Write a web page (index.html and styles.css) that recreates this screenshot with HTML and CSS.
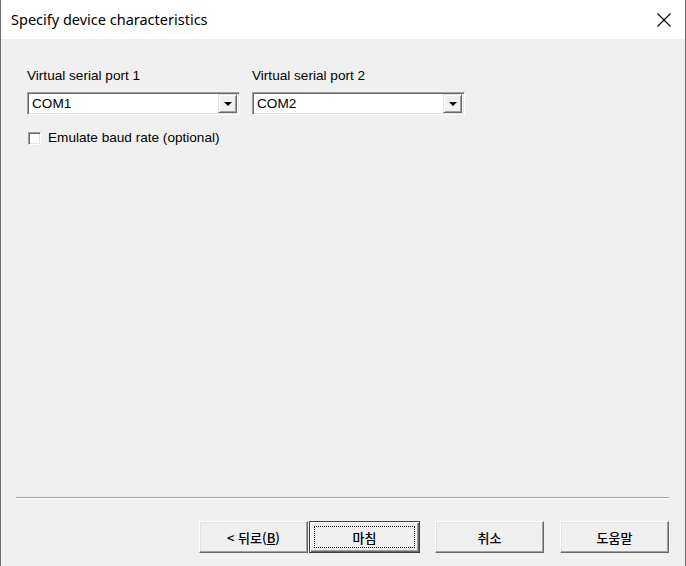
FILE: index.html
```html
<!DOCTYPE html>
<html lang="ko">
<head>
    <meta charset="UTF-8">
    <meta name="viewport" content="width=device-width, initial-scale=1.0">
    <title>Specify device characteristics</title>
    <link rel="stylesheet" href="styles.css">
</head>
<body>
    <div class="window">
        <div class="titlebar">
            <span class="title">Specify device characteristics</span>
            <span class="close">
                <svg width="14" height="14" viewBox="0 0 14 14">
                    <path d="M0.5 0.5 L13.5 13.5 M13.5 0.5 L0.5 13.5" stroke="#000" stroke-width="1.1" fill="none"/>
                </svg>
            </span>
        </div>

        <div class="content">
            <div class="ports">
                <div class="field">
                    <label class="label">Virtual serial port 1</label>
                    <div class="combo">
                        <span class="value">COM1</span>
                        <span class="arrow"><span class="tri"></span></span>
                    </div>
                </div>
                <div class="field">
                    <label class="label">Virtual serial port 2</label>
                    <div class="combo">
                        <span class="value">COM2</span>
                        <span class="arrow"><span class="tri"></span></span>
                    </div>
                </div>
            </div>
            <label class="check">
                <span class="box"></span>
                <span>Emulate baud rate (optional)</span>
            </label>
        </div>

        <div class="footer">
            <div class="separator"></div>
            <div class="buttons">
                <div class="wizard">
                    <button class="btn">&lt; 뒤로(<u>B</u>)</button>
                    <button class="btn default">마침</button>
                </div>
                <button class="btn cancel">취소</button>
                <button class="btn help">도움말</button>
            </div>
        </div>
    </div>
</body>
</html>
```

FILE: styles.css
```css
* {
    box-sizing: border-box;
}

body {
    margin: 0;
    background: #f0f0f0;
}

.window {
    width: 686px;
    height: 566px;
    display: flex;
    flex-direction: column;
    background: #f0f0f0;
    border-left: 1px solid #6f6f6f;
    border-right: 1px solid #6f6f6f;
    font-family: "Liberation Sans", Arial, sans-serif;
    font-size: 13.6px;
    color: #000;
}

.titlebar {
    height: 39px;
    background: #fff;
    display: flex;
    align-items: center;
    justify-content: space-between;
    padding: 0 14px 0 10px;
}

.title {
    font-family: "Noto Sans", sans-serif;
    font-size: 14.5px;
    color: #000;
    padding-bottom: 1px;
}

.close {
    display: flex;
    width: 14px;
    height: 14px;
    margin-top: 1px;
}

.content {
    flex: 1;
    padding: 29px 0 0 26px;
}

.ports {
    display: flex;
    gap: 12px;
}

.field {
    width: 213px;
}

.label {
    display: block;
    line-height: 16px;
    margin-bottom: 8px;
}

.combo {
    height: 23px;
    display: flex;
    align-items: center;
    justify-content: space-between;
    background: #fff;
    border: 1px solid;
    border-color: #a0a0a0 #fff #fff #a0a0a0;
    box-shadow: inset 1px 1px #696969, inset -1px -1px #e3e3e3;
    padding: 1px 2px 1px 4px;
}

.value {
    line-height: 16px;
}

.arrow {
    width: 19px;
    height: 19px;
    display: flex;
    align-items: center;
    justify-content: center;
    background: #f0f0f0;
    border: 1px solid;
    border-color: #e3e3e3 #696969 #696969 #e3e3e3;
    box-shadow: inset 1px 1px #fff, inset -1px -1px #a0a0a0;
}

.tri {
    width: 0;
    height: 0;
    border-left: 4px solid transparent;
    border-right: 4px solid transparent;
    border-top: 4px solid #000;
    margin-top: 1px;
}

.check {
    display: flex;
    align-items: center;
    gap: 7px;
    margin-top: 15px;
    margin-left: 1px;
    line-height: 16px;
}

.box {
    width: 13px;
    height: 13px;
    background: #fff;
    border: 1px solid;
    border-color: #a0a0a0 #fff #fff #a0a0a0;
    box-shadow: inset 1px 1px #696969, inset -1px -1px #e3e3e3;
}

.footer {
    padding: 0 16px 13px 15px;
}

.separator {
    height: 2px;
    border-top: 1px solid #a0a0a0;
    border-bottom: 1px solid #fff;
}

.buttons {
    display: flex;
    justify-content: flex-end;
    margin-top: 22px;
}

.wizard {
    display: flex;
    gap: 1px;
}

.btn {
    position: relative;
    width: 109px;
    height: 32px;
    padding: 0;
    background: #f0f0f0;
    border: 1px solid;
    border-color: #fff #696969 #696969 #fff;
    box-shadow: inset -1px -1px #a0a0a0, inset 1px 1px #e3e3e3;
    font-family: "Noto Sans CJK KR", "Liberation Sans", sans-serif;
    font-size: 13px;
    font-weight: 500;
    color: #000;
}

.btn.default {
    width: 111px;
    border: 1px solid #3c3c3c;
    box-shadow: inset 1px 1px #fff, inset -1px -1px #696969, inset -2px -2px #a0a0a0;
}

.btn.default::after {
    content: "";
    position: absolute;
    top: 4px;
    left: 4px;
    right: 4px;
    bottom: 4px;
    border: 1px dotted #000;
}

.cancel {
    margin-left: 15px;
}

.help {
    margin-left: 16px;
}
```
